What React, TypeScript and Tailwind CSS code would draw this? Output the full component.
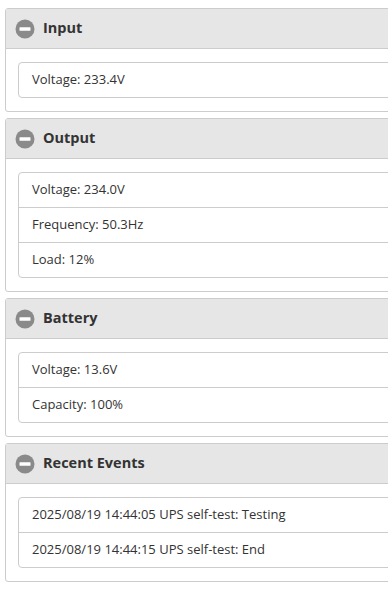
import React from "react";

const sections: { title: string; rows: string[] }[] = [
  { title: "Input", rows: ["Voltage: 233.4V"] },
  { title: "Output", rows: ["Voltage: 234.0V", "Frequency: 50.3Hz", "Load: 12%"] },
  { title: "Battery", rows: ["Voltage: 13.6V", "Capacity: 100%"] },
  {
    title: "Recent Events",
    rows: ["2025/08/19 14:44:05 UPS self-test: Testing", "2025/08/19 14:44:15 UPS self-test: End"],
  },
];

function MinusIcon() {
  return (
    <svg width="20" height="20" viewBox="0 0 20 20" className="shrink-0">
      <circle cx="10" cy="10" r="9.5" fill="#8a8a8a" />
      <rect x="4.5" y="8.2" width="11" height="3.6" rx="0.5" fill="#ffffff" />
    </svg>
  );
}

export default function App() {
  return (
    <div
      className="w-[388px] h-[597px] overflow-hidden bg-white text-[#333]"
      style={{ fontFamily: '"Open Sans", "Noto Sans", sans-serif' }}
    >
      <div className="flex flex-col gap-[6px] pl-[5px] pt-[8px] w-[440px]">
        {sections.map((s) => (
          <div key={s.title} className="border border-[#cccccc] rounded-[3px] bg-white">
            <div className="h-[40px] bg-[#e6e6e6] border-b border-[#cccccc] flex items-center gap-[8px] pl-[9px]">
              <MinusIcon />
              <span className="text-[14.5px] font-bold leading-none">{s.title}</span>
            </div>
            <div className="px-[12px] py-[13px]">
              <div className="border border-[#cccccc] rounded-[4px]">
                {s.rows.map((r, i) => (
                  <div
                    key={r}
                    className={`flex items-center pl-[13px] text-[13px] ${i > 0 ? "h-[35px] border-t border-[#cccccc]" : "h-[34px]"}`}
                  >
                    {r}
                  </div>
                ))}
              </div>
            </div>
          </div>
        ))}
      </div>
    </div>
  );
}
